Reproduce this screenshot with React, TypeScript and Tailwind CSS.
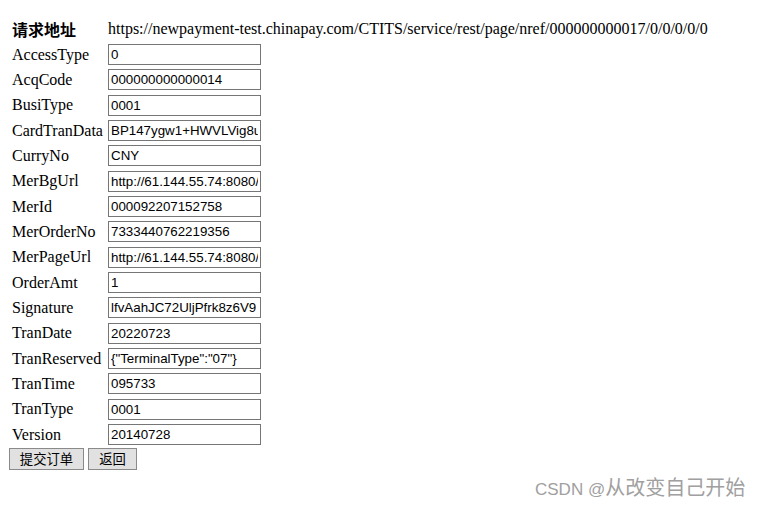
import React from "react";

const rows: [string, string][] = [
  ["AccessType", "0"],
  ["AcqCode", "000000000000014"],
  ["BusiType", "0001"],
  ["CardTranData", "BP147ygw1+HWVLVig8uQ2"],
  ["CurryNo", "CNY"],
  ["MerBgUrl", "http://61.144.55.74:8080/notify"],
  ["MerId", "000092207152758"],
  ["MerOrderNo", "7333440762219356"],
  ["MerPageUrl", "http://61.144.55.74:8080/page"],
  ["OrderAmt", "1"],
  ["Signature", "lfvAahJC72UljPfrk8z6V9"],
  ["TranDate", "20220723"],
  ["TranReserved", '{"TerminalType":"07"}'],
  ["TranTime", "095733"],
  ["TranType", "0001"],
  ["Version", "20140728"],
];

export default function App() {
  return (
    <div
      className="relative w-[761px] h-[507px] bg-white text-black overflow-hidden pt-[16.5px] pl-[12px]"
      style={{ fontFamily: '"Liberation Serif", "Noto Sans CJK SC", serif' }}
    >
      <div className="flex items-center h-[25.35px] text-[16px]">
        <div className="w-[96px] font-bold" style={{ fontFamily: '"Noto Sans CJK SC", sans-serif' }}>
          请求地址
        </div>
        <div className="whitespace-nowrap">
          https://newpayment-test.chinapay.com/CTITS/service/rest/page/nref/000000000017/0/0/0/0/0
        </div>
      </div>
      {rows.map(([k, v]) => (
        <div key={k} className="flex items-center h-[25.35px] text-[16px]">
          <div className="w-[96px] whitespace-nowrap">{k}</div>
          <input
            readOnly
            value={v}
            className="w-[153px] h-[21px] border border-[#767676] px-[2px] text-[13.33px] text-black outline-none"
            style={{ fontFamily: '"Liberation Sans", Arial, sans-serif' }}
          />
        </div>
      ))}
      <div className="flex gap-[4px] ml-[-3px] mt-[1px]">
        <button
          className="w-[75px] h-[22px] border border-[#8a8a8a] bg-[#e1e1e1] text-[13.33px] text-black"
          style={{ fontFamily: '"Noto Sans CJK SC", sans-serif' }}
        >
          提交订单
        </button>
        <button
          className="w-[49px] h-[22px] border border-[#8a8a8a] bg-[#e1e1e1] text-[13.33px] text-black"
          style={{ fontFamily: '"Noto Sans CJK SC", sans-serif' }}
        >
          返回
        </button>
      </div>
      <div
        className="absolute left-[535px] top-[473px] text-[17px] text-[#a0a0a0] whitespace-nowrap"
        style={{ fontFamily: '"Liberation Sans", "Noto Sans CJK SC", sans-serif' }}
      >
        CSDN @<span className="text-[20px]">从改变自己开始</span>
      </div>
    </div>
  );
}
